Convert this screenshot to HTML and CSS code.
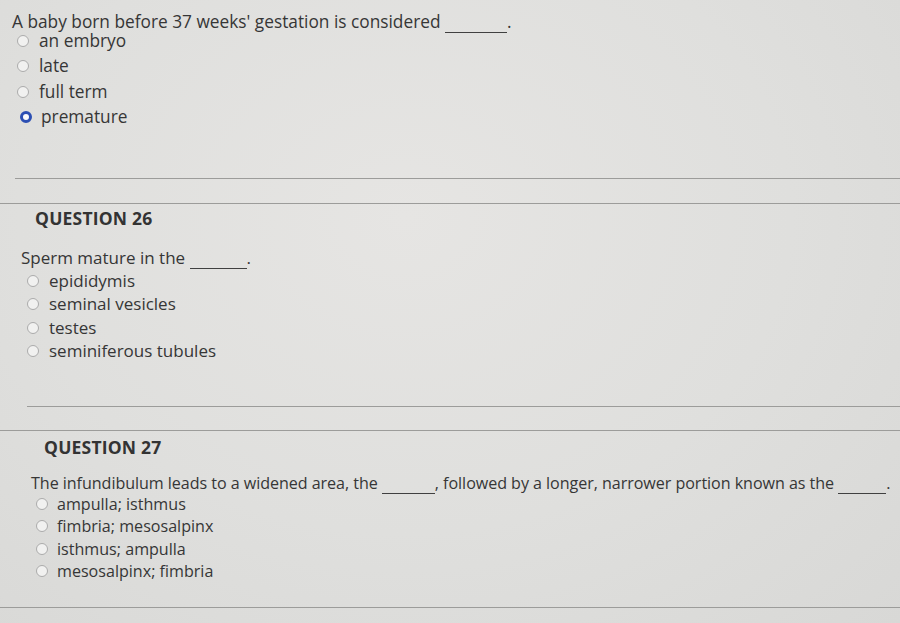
FILE: index.html
```html
<!DOCTYPE html>
<html lang="en">
<head>
<meta charset="utf-8">
<title>Quiz</title>
<link rel="stylesheet" href="styles.css">
</head>
<body>
<div class="page">
  <section class="q q25">
    <p class="stem">A baby born before 37 weeks' gestation is considered <span class="blank b62"></span>.</p>
    <ul class="opts">
      <li><span class="radio"></span>an embryo</li>
      <li><span class="radio"></span>late</li>
      <li><span class="radio"></span>full term</li>
      <li class="sel"><span class="radio on"></span>premature</li>
    </ul>
  </section>
  <div class="sep sep-a"></div>
  <div class="sep sep-b"></div>
  <section class="q q26">
    <h2 class="qh">QUESTION 26</h2>
    <p class="stem">Sperm mature in the <span class="blank b57"></span>.</p>
    <ul class="opts">
      <li><span class="radio"></span>epididymis</li>
      <li><span class="radio"></span>seminal vesicles</li>
      <li><span class="radio"></span>testes</li>
      <li><span class="radio"></span>seminiferous tubules</li>
    </ul>
  </section>
  <div class="sep sep-c"></div>
  <div class="sep sep-d"></div>
  <section class="q q27">
    <h2 class="qh">QUESTION 27</h2>
    <p class="stem">The infundibulum leads to a widened area, the <span class="blank b53"></span>, followed by a longer, narrower portion known as the <span class="blank b51"></span>.</p>
    <ul class="opts">
      <li><span class="radio"></span>ampulla; isthmus</li>
      <li><span class="radio"></span>fimbria; mesosalpinx</li>
      <li><span class="radio"></span>isthmus; ampulla</li>
      <li><span class="radio"></span>mesosalpinx; fimbria</li>
    </ul>
  </section>
  <div class="sep sep-e"></div>
</div>
</body>
</html>
```

FILE: styles.css
```css
html, body {
  margin: 0;
  padding: 0;
}
body {
  width: 900px;
  height: 623px;
  overflow: hidden;
  background: radial-gradient(ellipse at 45% 35%, #e6e5e3 0%, #dfdfdd 55%, #d8d8d6 100%);
  font-family: "Open Sans", "Noto Sans", sans-serif;
  font-weight: 500;
  color: #363636;
}
.page {
  display: flex;
  flex-direction: column;
}
.q { display: flex; flex-direction: column; }
.stem {
  margin: 0;
  white-space: nowrap;
  line-height: 14px;
  height: 14px;
}
.qh {
  margin: 0;
  font-size: 17.5px;
  line-height: 20px;
  font-weight: 700;
  color: #333;
  letter-spacing: 0.2px;
}
.opts {
  list-style: none;
  margin: 0;
  padding: 0;
  display: flex;
  flex-direction: column;
}
.opts li {
  display: flex;
  align-items: center;
  line-height: 18px;
}
.radio {
  flex: none;
  width: 10px;
  height: 10px;
  border-radius: 50%;
  border: 1.5px solid #ababab;
  background: #f1f1f0;
}
.radio.on {
  width: 6px;
  height: 6px;
  border: 3.5px solid #2c4fb3;
  background: #fbfbfb;
}
.blank {
  display: inline-block;
  height: 0;
  border-bottom: 1px solid #404040;
  vertical-align: -5px;
}
.b62 { width: 62px; }
.b57 { width: 57px; }
.b53 { width: 53px; }
.b51 { width: 48px; }
.sep {
  height: 1px;
  background: #9c9c9a;
}

/* Question 25 */
.q25 { padding: 15px 0 0 12px; font-size: 17.3px; }
.q25 .opts { margin-top: -1px; padding-left: 5px; }
.q25 .opts li { height: 25.5px; gap: 10px; }
.q25 .opts li.sel { padding-left: 3px; gap: 9px; }

.sep-a { margin: 48px 0 0 15px; }
.sep-b { margin-top: 24px; }

/* Question 26 */
.q26 { font-size: 17px; }
.q26 .qh { margin: 4px 0 0 35px; }
.q26 .stem { margin: 23px 0 0 21px; }
.q26 .opts { margin: 4px 0 0 27px; }
.q26 .opts li { height: 23.5px; gap: 10px; }

.sep-c { margin: 43px 0 0 27px; }
.sep-d { margin-top: 23px; }

/* Question 27 */
.q27 { font-size: 16.1px; }
.q27 .qh { margin: 6px 0 0 44px; }
.q27 .stem { margin: 19px 0 0 31px; letter-spacing: -0.05px; }
.q27 .opts { margin: 3px 0 0 36px; }
.q27 .opts li { height: 22.3px; gap: 9px; }

.sep-e { margin-top: 25px; }
```
